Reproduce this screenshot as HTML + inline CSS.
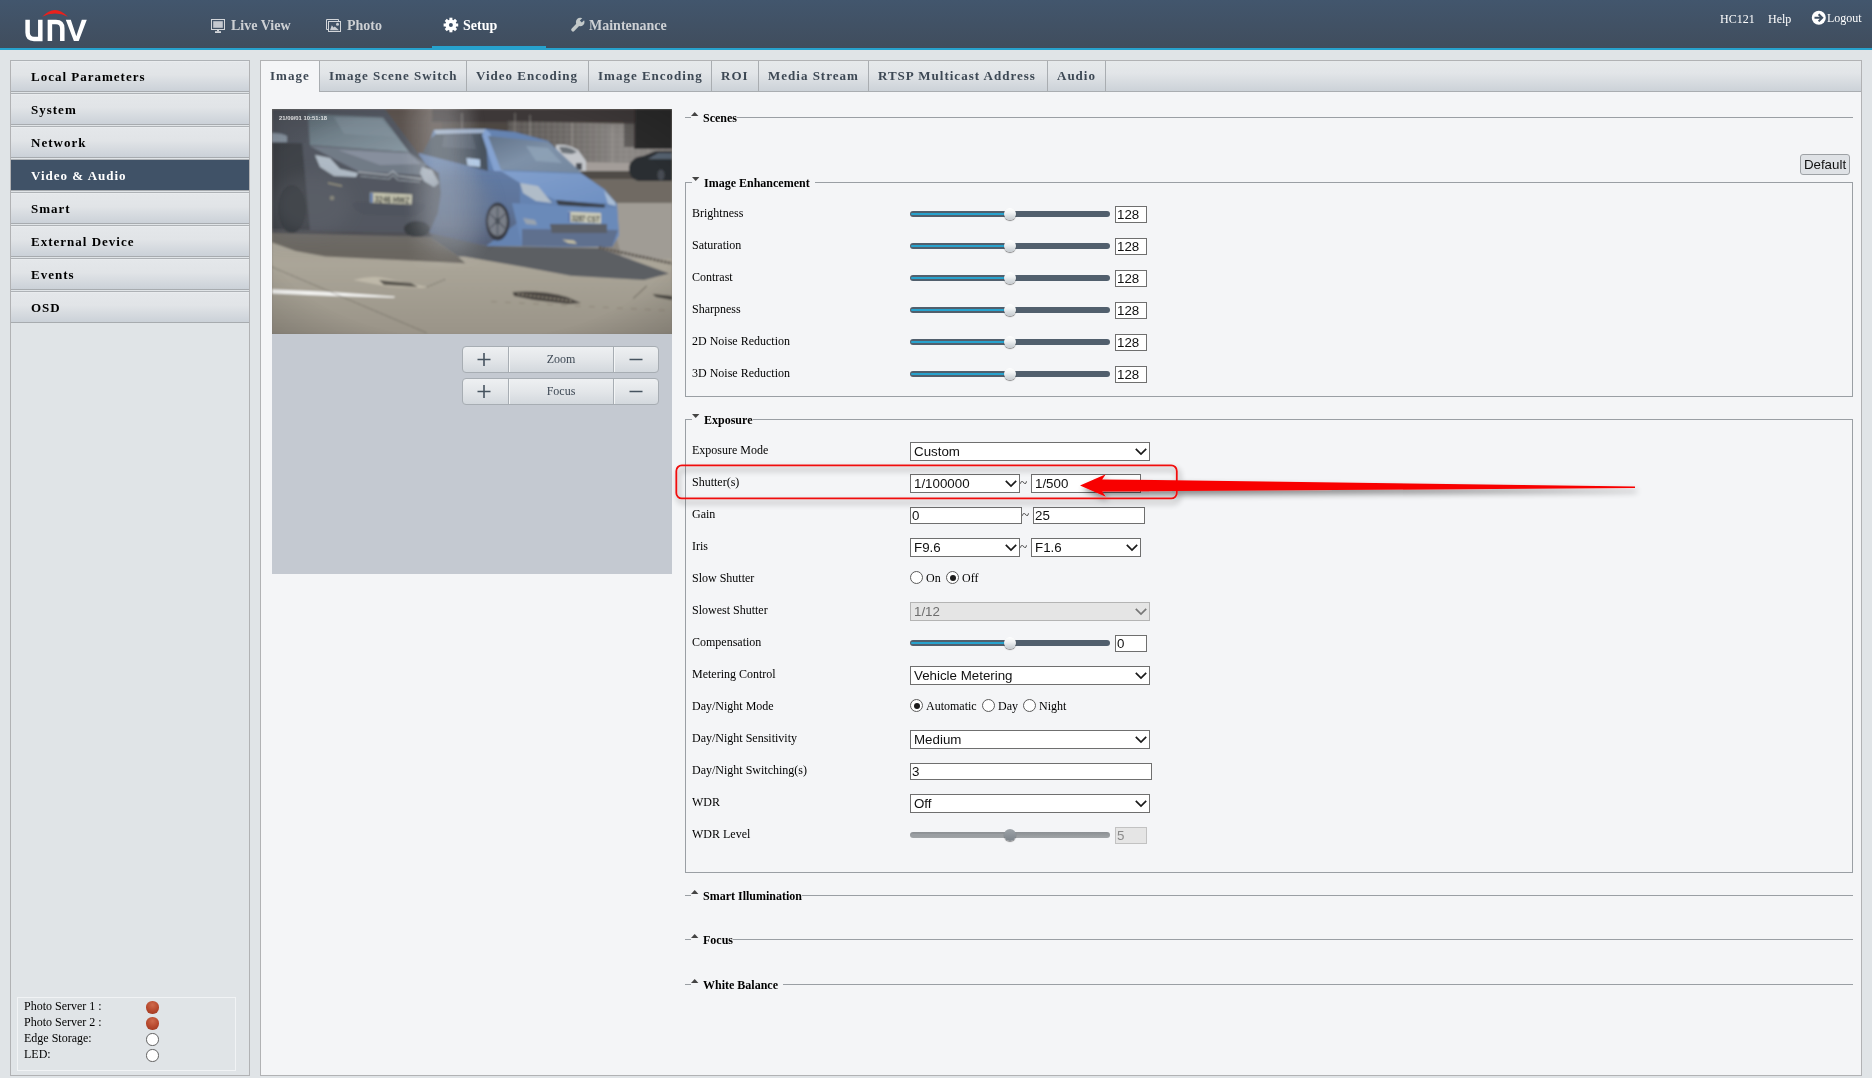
<!DOCTYPE html>
<html>
<head>
<meta charset="utf-8">
<title>Setup</title>
<style>
*{box-sizing:border-box;}
html,body{margin:0;padding:0;}
body{width:1872px;height:1078px;overflow:hidden;background:#e0e4e7;font-family:"Liberation Serif",serif;font-size:12px;color:#000;position:relative;}
div,span{position:absolute;white-space:nowrap;}
#hdr,#side,#main,#c{will-change:transform;}
svg{position:absolute;overflow:visible;}
/* header */
#hdr{left:0;top:0;width:1872px;height:50px;background:linear-gradient(#42566d,#404d5d);border-bottom:2px solid #27a2cd;}
.nav{top:17px;height:18px;line-height:18px;font-weight:bold;font-size:14px;color:#cdd0d4;}
.nav.on{color:#fff;}
.ul{left:432px;top:46px;width:114px;height:4px;background:#27a2cd;}
.r{top:11px;height:16px;line-height:16px;font-size:12px;color:#fff;}
/* sidebar */
#side{left:10px;top:60px;width:240px;height:1016px;border:1px solid #b1b2b4;background:#e0e4e7;}
.mi{left:0;width:238px;height:32px;border-top:1px solid #aeb2b6;border-bottom:1px solid #a7abaf;background:linear-gradient(#eef0f2 0,#e4e7ea 1px,#e1e4e7 45%,#cbd1d8 100%);font-weight:bold;font-size:13px;letter-spacing:1px;line-height:32px;padding-left:20px;color:#000;}
.mi.on{background:#405267;color:#fff;}
#stat{left:6px;top:936px;width:219px;height:74px;border:1px solid #f1f3f5;}
.sl{left:6px;height:16px;line-height:16px;font-size:12px;}
.led{left:128.4px;width:12.4px;height:12.4px;border-radius:50%;}
.led.r1{background:radial-gradient(circle at 50% 30%,#cf6a4c 0,#b6482d 55%,#98351e 100%);}
.led.w{background:#fff;border:1px solid #666;}
/* main */
#main{left:260px;top:60px;width:1602px;height:1016px;border:1px solid #b1b2b4;background:#f4f5f7;}
#tabs{left:0;top:0;width:1600px;height:31px;background:linear-gradient(#e6e9eb 0,#e2e5e8 40%,#ccd2d8 100%);border-bottom:1px solid #a9adb1;}
.tab{top:0;height:30px;border-right:1px solid #a9adb1;font-weight:bold;font-size:13px;letter-spacing:1px;line-height:29px;color:#3d4854;padding-left:9px;}
.tab.on{background:#f4f5f7;height:31px;}
/* content (page coords) */
#c{left:0;top:0;width:1872px;height:1078px;}
.ln{background:#9a9fa4;}
.lg{font-weight:bold;font-size:12px;height:16px;line-height:16px;color:#000;}
.lb{left:692px;height:16px;line-height:16px;font-size:12px;color:#000;}
.tx{height:16px;line-height:16px;font-size:12px;color:#000;}
.sel{height:19px;border:1px solid #6f6f6f;background:#fff;font-family:"Liberation Sans",sans-serif;font-size:13.333px;line-height:17px;padding-left:3px;color:#111;}
.sel.dis{background:#e5e5e5;border-color:#b4b4b4;color:#6d6d6d;}
.inp{height:17px;border:1px solid #6f6f6f;background:#fff;font-family:"Liberation Sans",sans-serif;font-size:13.333px;line-height:15px;padding-left:1px;color:#111;}
.inp.dis{background:#e5e5e5;border-color:#c2c2c2;color:#8a8a8a;}
.trk{left:910px;width:200px;height:6px;border-radius:3px;background:#515f6d;}
.trk i{position:absolute;left:1px;top:2px;width:100px;height:2px;border-radius:1px;background:#27a2cd;}
.trk.dis{background:linear-gradient(#8b8f93,#a1a5a8);}
.trk.dis i{background:#9a9ea2;}
.th{left:1004px;width:12px;height:12px;border-radius:50%;background:linear-gradient(#ffffff 0,#f0f2f3 40%,#c3c9ce 100%);box-shadow:0 1px 1px rgba(0,0,0,.45);}
.th.dis{background:linear-gradient(#9da3a8,#7d848a);}
.rad{width:13px;height:13px;border-radius:50%;border:1px solid #5a5a5a;background:#fff;}
.rad.on::after{content:"";position:absolute;left:2.5px;top:2.5px;width:6px;height:6px;border-radius:50%;background:#1c1c1c;}
.btng{width:197px;height:27px;border:1px solid #a7adb3;border-radius:4px;background:linear-gradient(#eef0f2 0,#e3e6e9 50%,#d3d8dd 100%);}
.btng b{position:absolute;top:0;width:1px;height:25px;background:#a7adb3;box-shadow:1px 0 0 #f3f5f6;}
.btng span{top:4px;height:16px;line-height:16px;font-size:12px;color:#3d4854;left:46px;width:104px;text-align:center;}
</style>
</head>
<body>
<div id="hdr"><div class="ul"></div>
<svg width="110" height="48" style="left:0;top:0">
<path d="M27.600 19.800V32.600Q27.600 39 34 39H40.300V19.800" fill="none" stroke="#fff" stroke-width="4.500"/>
<path d="M49.900 41V21.900H56Q62.300 21.900 62.300 28.400V41" fill="none" stroke="#fff" stroke-width="4.500"/>
<path d="M65.800 19.800H70.800L76.300 36.300L81.800 19.800H86.800L78.700 41H73.900Z" fill="#fff"/>
<path d="M42.200 16.800Q55 3 67.900 16.800Q55 10.200 42.200 16.800Z" fill="#e9211d"/>
</svg>

<svg width="700" height="48" style="left:0;top:0">
<!-- monitor -->
<rect x="211.500" y="19.500" width="13" height="10" fill="none" stroke="#d3d6da" stroke-width="1"/>
<rect x="213.200" y="21.200" width="9.600" height="6.600" fill="#c4c8cf"/>
<rect x="217" y="30" width="2" height="1.400" fill="#d3d6da"/>
<rect x="215" y="31.200" width="6" height="1.800" fill="#d3d6da"/>
<!-- photo -->
<path d="M328 29.500H326.500V19.500H338.500V21" fill="none" stroke="#d3d6da" stroke-width="1"/>
<rect x="328.500" y="21.500" width="12" height="10" fill="none" stroke="#d3d6da" stroke-width="1"/>
<path d="M330 30.200L331.800 25.200L333.600 27.600L334.800 26.600L339 30.200Z" fill="#c9cdd2"/>
<circle cx="337.500" cy="24.300" r="1.500" fill="#c9cdd2"/>
<!-- gear -->
<g transform="translate(450.900 25)" fill="#fff">
<circle r="5.500"/>
<g id="t"><rect x="-1.500" y="-7.300" width="3" height="14.600"/></g>
<rect x="-1.500" y="-7.300" width="3" height="14.600" transform="rotate(45)"/>
<rect x="-1.500" y="-7.300" width="3" height="14.600" transform="rotate(90)"/>
<rect x="-1.500" y="-7.300" width="3" height="14.600" transform="rotate(135)"/>
<circle r="2" fill="#405268"/>
</g>
<!-- wrench -->
<g>
<path d="M573 29.800L579.500 23" stroke="#c3c9c9" stroke-width="3.600" stroke-linecap="round" fill="none"/>
<circle cx="580.200" cy="22" r="4.300" fill="#c3c9c9"/>
<path d="M580.800 21.600L586 16.600" stroke="#415369" stroke-width="2.800" fill="none"/>
</g>
</svg>
<svg width="16" height="16" style="left:1811px;top:10px"><circle cx="7.800" cy="7.800" r="7" fill="#fff"/><path d="M3.500 7.800H10.500M7.600 4.200L11.200 7.800L7.600 11.400" fill="none" stroke="#3f5064" stroke-width="2"/></svg>

<div class="nav" style="left:231px">Live View</div>
<div class="nav" style="left:347px">Photo</div>
<div class="nav on" style="left:463px">Setup</div>
<div class="nav" style="left:589px">Maintenance</div>
<div class="r" style="left:1720px">HC121</div>
<div class="r" style="left:1768px">Help</div>
<div class="r" style="left:1827px;top:10px">Logout</div>
</div>
<div id="side">
<div class="mi" style="top:-1px">Local Parameters</div>
<div class="mi" style="top:32px">System</div>
<div class="mi" style="top:65px">Network</div>
<div class="mi on" style="top:98px">Video &amp; Audio</div>
<div class="mi" style="top:131px">Smart</div>
<div class="mi" style="top:164px">External Device</div>
<div class="mi" style="top:197px">Events</div>
<div class="mi" style="top:230px">OSD</div>
<div id="stat">
<div class="sl" style="top:0px">Photo Server 1 :</div><div class="led r1" style="top:3.3px"></div>
<div class="sl" style="top:16px">Photo Server 2 :</div><div class="led r1" style="top:19.3px"></div>
<div class="sl" style="top:32px">Edge Storage:</div><div class="led w" style="top:35.3px"></div>
<div class="sl" style="top:48px">LED:</div><div class="led w" style="top:51.3px"></div>
</div></div>
<div id="main"><div id="tabs">
<div class="tab on" style="left:0px;width:59px">Image</div>
<div class="tab" style="left:59px;width:147px">Image Scene Switch</div>
<div class="tab" style="left:206px;width:122px">Video Encoding</div>
<div class="tab" style="left:328px;width:123px">Image Encoding</div>
<div class="tab" style="left:451px;width:47px">ROI</div>
<div class="tab" style="left:498px;width:110px">Media Stream</div>
<div class="tab" style="left:608px;width:179px">RTSP Multicast Address</div>
<div class="tab" style="left:787px;width:58px">Audio</div>
</div></div>
<div id="c">
<div style="left:272px;top:334px;width:400px;height:240px;background:#c4c9d1"></div>
<svg width="400" height="225" viewBox="0 0 400 225" style="left:272px;top:109px;overflow:hidden">
<defs>
<filter id="bl" x="-5%" y="-5%" width="110%" height="110%"><feGaussianBlur stdDeviation="0.8"/></filter>
<filter id="bl3" x="-20%" y="-20%" width="140%" height="140%"><feGaussianBlur stdDeviation="3"/></filter>
<filter id="bl8" x="-30%" y="-30%" width="160%" height="160%"><feGaussianBlur stdDeviation="8"/></filter>
<linearGradient id="gnd" x1="0" y1="0" x2="0" y2="1"><stop offset="0" stop-color="#a5a095"/><stop offset=".45" stop-color="#aaa598"/><stop offset="1" stop-color="#9a9488"/></linearGradient>
<linearGradient id="ws1" x1="0" y1="0" x2="1" y2="1"><stop offset="0" stop-color="#596871"/><stop offset=".6" stop-color="#75858f"/><stop offset="1" stop-color="#8797a1"/></linearGradient>
<linearGradient id="ws2" x1="0" y1="0" x2="1" y2="1"><stop offset="0" stop-color="#63748a"/><stop offset=".5" stop-color="#7e91a8"/><stop offset="1" stop-color="#74879e"/></linearGradient>
<linearGradient id="hood2" x1="0" y1="0" x2="1" y2="1"><stop offset="0" stop-color="#82a0cd"/><stop offset="1" stop-color="#6f90c2"/></linearGradient>
<linearGradient id="side2" x1="0" y1="0" x2="0" y2="1"><stop offset="0" stop-color="#6680ab"/><stop offset=".6" stop-color="#5d7398"/><stop offset="1" stop-color="#565f75"/></linearGradient>
<linearGradient id="fenceg" x1="0" y1="0" x2="1" y2="0"><stop offset="0" stop-color="#595552"/><stop offset=".35" stop-color="#6d6966"/><stop offset=".7" stop-color="#8a8683"/><stop offset="1" stop-color="#85817e"/></linearGradient>
<linearGradient id="flare" x1="0" y1="0" x2="1" y2="0"><stop offset="0" stop-color="#fff" stop-opacity="0"/><stop offset=".4" stop-color="#fff" stop-opacity=".24"/><stop offset=".6" stop-color="#fff" stop-opacity=".22"/><stop offset="1" stop-color="#fff" stop-opacity="0"/></linearGradient>
<linearGradient id="flarev" x1="0" y1="0" x2="0" y2="1"><stop offset="0" stop-color="#fff"/><stop offset=".72" stop-color="#fff"/><stop offset="1" stop-color="#000"/></linearGradient>
<mask id="fm"><rect x="90" y="-10" width="140" height="175" fill="url(#flarev)"/></mask>
<radialGradient id="vig" cx=".5" cy=".5" r=".75"><stop offset=".7" stop-color="#000" stop-opacity="0"/><stop offset="1" stop-color="#000" stop-opacity=".18"/></radialGradient>
<pattern id="fence" width="6" height="5" patternUnits="userSpaceOnUse"><path d="M0 0H6M0 0V5" stroke="#c9c6c1" stroke-width=".6" opacity=".4"/></pattern>
</defs>
<rect width="400" height="225" fill="#8f8a80"/>
<g filter="url(#bl)">
<!-- ground -->
<rect x="0" y="100" width="400" height="125" fill="url(#gnd)"/>
<!-- wall / background top -->
<rect x="100" y="0" width="300" height="66" fill="#4e4642"/>
<rect x="110" y="0" width="60" height="62" fill="#554b45"/>
<rect x="160" y="0" width="240" height="13" fill="#3d3937"/>
<!-- fence area -->
<path d="M236 12L400 16V58L236 52Z" fill="url(#fenceg)"/>
<path d="M236 12L400 16V58L236 52Z" fill="url(#fence)"/>
<path d="M258 6V36M300 14V50M340 16V54M376 20V52M190 4V20M243 4V28" stroke="#bdb9b3" stroke-width="1" opacity=".5"/>
<rect x="362" y="0" width="38" height="40" fill="#2c2a2a"/>
<rect x="352" y="0" width="12" height="38" fill="#3c3938" opacity=".55"/>
<!-- kerb / light wall base -->
<path d="M312 53L362 54V62L312 62Z" fill="#a39d99"/>
<!-- road right -->
<path d="M305 62H400V150H330Z" fill="#8c8780"/>
<path d="M306 62H400V71L312 70Z" fill="#504b47"/>
<path d="M314 70H400V94H336Z" fill="#6f6a64"/>
<path d="M336 94H400V150H350Z" fill="#a09c95"/>
<!-- far black car -->
<path d="M357 58Q359 48 371 47L384 42H400V72L366 72Q356 69 357 58Z" fill="#2a2d33"/>
<path d="M376 50L386 44H400V50Z" fill="#56626f"/>
<ellipse cx="389" cy="66" rx="3.500" ry="5.500" fill="#474b52"/>
<!-- white car behind -->
<path d="M284 36Q296 35 306 41L314 52V62H297L284 44Z" fill="#c3c6ca"/>
<path d="M287 38Q297 37 305 43L300 45L290 44Z" fill="#6c7278"/>
<rect x="304" y="54" width="6" height="7" fill="#4c4f54"/>
<!-- BLUE CAR -->
<path d="M162 21L214 20L243 23L276 32L310 65L333 81L345 95L347 126L340 138L214 137L158 124L147 60Z" fill="#6583b1"/>
<path d="M147 44L214 60L248 66V112L214 137L158 126L148 90Z" fill="url(#side2)"/>
<path d="M165 24L214 23.500L216 62L150 45L158 30Z" fill="#4a525f"/>
<path d="M172 26L200 25.500L204 40L170 38Z" fill="#5c6675" opacity=".7"/>
<path d="M162 21L214 20L214 24L164 25Z" fill="#9eb0ca"/>
<path d="M213 20L218 24L231 62L222 62L210 26Z" fill="#84a2d0"/>
<path d="M216 27L276 33L310 64L229 61Z" fill="url(#ws2)"/>
<path d="M254 37L276 39L290 54L264 52Z" fill="#93a7ba" opacity=".7"/>
<path d="M229 62L310 65L333 81L335.500 94L286 92L248 74Z" fill="url(#hood2)"/>
<path d="M248 74L266 77L280 94L264 92L251 84Z" fill="#b0bcc8"/>
<path d="M332 81L343 93L344 97L336 95Z" fill="#a8bcd4"/>
<path d="M284 91L333 95.500L332.500 99.500L286 96Z" fill="#3a4048"/>
<path d="M240 94L286 97L345 99L347 126L340 138L250 137Z" fill="#6b8ab9"/>
<path d="M250 120L346 121L340 138L250 137Z" fill="#5f6f8e"/>
<path d="M278 115H335V124H280Z" fill="#52576399"/>
<path d="M278 115H335V124H280Z" fill="#5a5e68"/>
<path d="M251 109L263 111L265 116L254 115Z" fill="#98a3af"/>
<path d="M194.500 49L208 50.500V58L195.500 56.500Z" fill="#b3cbe8"/>
<!-- wheel -->
<ellipse cx="225.500" cy="112.500" rx="12" ry="19" fill="#383b43"/>
<ellipse cx="225.500" cy="112" rx="9.400" ry="15" fill="#7a7f88"/>
<path d="M225.500 98V126M217 104L234 120M217 120L234 104" stroke="#555a63" stroke-width="1.400"/>
<ellipse cx="225.500" cy="112" rx="2.500" ry="3.500" fill="#4a4f58"/>
<!-- plate 2 -->
<path d="M296 102.500L329 104L329 114.500L296 113Z" fill="#cacab8"/>
<path d="M296.300 103L298.200 103.100V113L296.300 112.900Z" fill="#3d62a8"/>
<text x="299.500" y="112" font-family="Liberation Sans" font-weight="bold" font-size="8.500" fill="#3a3c38" transform="rotate(2.500 299 112)" textLength="28" lengthAdjust="spacingAndGlyphs">3287 CST</text>
<!-- shadows -->
<path d="M0 110H150L158 124L214 137L327 139L397 164.500L372 171L299 166.700L252 158L192 147.500L186 147.500L158 128L0 124Z" fill="#5c5e63"/>
<path d="M0 123L158 128L186 147.500L193.400 154.300L53.400 147.500L23.500 142L0 133.500Z" fill="#6b6660"/>
<path d="M0 110H150L160 128L0 124Z" fill="#48494d"/>
<path d="M327 138.500L400 154.500" stroke="#5a544e" stroke-width="3" stroke-dasharray="2.500 1.200"/>
<path d="M290 130.500L302 131.500L305 135L296 134Z" fill="#c2bda2"/>
<!-- DARK (grey) CAR -->
<path d="M0 0H113L145 43L154 55.500L167 64L169 84L166 104L158 122L150 124L28 121L0 120Z" fill="#4c5059"/>
<path d="M0 32H30L38 121L0 120Z" fill="#36383d"/>
<path d="M0 0H36L34 34H0Z" fill="#494e57"/>
<path d="M36 5L111 8.500L137 43L38 36Z" fill="url(#ws1)"/>
<path d="M62 8L109 10L124 28L72 25Z" fill="#8595a0" opacity=".45"/>
<path d="M38 37L137 43L154 55.500L150 66L85.500 62L64 51Z" fill="#6d7682"/>
<path d="M66 41L137 44.500L149 55L108 56Z" fill="#8b94a1" opacity=".8"/>
<path d="M43 46L58 49L68 60L86 64L84 68L62 67L48 58Z" fill="#b2bdc8"/>
<path d="M150 58L160 61L167 74L162 78L152 72L148 64Z" fill="#a9b3be"/>
<path d="M86 63L116 66L121 62L126 67L150 70" stroke="#a5acb3" stroke-width="1.300" fill="none"/>
<path d="M88 67L117 70L121 66L126 71L148 73" stroke="#9098a0" stroke-width="1.100" fill="none"/>
<path d="M80 95Q82 104 96 106L140 107Q152 105 154 96L150 94L84 93Z" fill="#474b54"/>
<path d="M56 74L70 77" stroke="#9a947a" stroke-width="1.500"/>
<circle cx="60" cy="89" r="2.200" fill="#8f8c78"/>
<path d="M0 24Q10 24 15 27V33H0Z" fill="#8793a0"/>
<ellipse cx="145" cy="120" rx="13" ry="8" fill="#2e3035"/>
<ellipse cx="20" cy="100" rx="14" ry="24" fill="#2b2d31"/>
<!-- plate 1 -->
<path d="M98 83.500L140 85.500L139.500 95.500L98 93.500Z" fill="#c8c6ae"/>
<path d="M98.500 84L100.800 84.200V93.500L98.500 93.400Z" fill="#3d62a8"/>
<text x="102.500" y="93" font-family="Liberation Sans" font-weight="bold" font-size="9" fill="#33352f" transform="rotate(2.500 103 93)" textLength="35" lengthAdjust="spacingAndGlyphs">3246 HWZ</text>
<!-- manholes etc -->
<path d="M81 171Q100 166 112 169L156 178L150 179L118 178Z" fill="#cfc8b8" opacity=".6"/>
<path d="M107 171L139 174L146 178L112 176Z" fill="#4a4642" opacity=".85"/>
<path d="M240.600 183Q270 181 295 188L309 194L296 195L262 191L242 187Z" fill="#4b4743"/>
<path d="M246 185L300 192" stroke="#b9b09c" stroke-width="1.200" stroke-dasharray="1.500 2.500"/>
<path d="M0 180.300L60 183L123 187.500L122 188.800L60 187L0 184.500Z" fill="#f2f2f0"/>
<path d="M0 158L155 224" stroke="#4f4a44" stroke-width=".8" stroke-dasharray="1.500 1.300"/>
<path d="M219 192.600L400 201.700" stroke="#7f776a" stroke-width=".8" stroke-dasharray="6 8" opacity=".7"/>
<path d="M361.300 189.400L374.700 177" stroke="#4a4640" stroke-width=".9"/>
<path d="M380.500 185L400 187V191L384 188Z" fill="#4a4642"/>
<path d="M155 178L174 170" stroke="#5a554e" stroke-width=".8" stroke-dasharray="2 1.500"/>
</g>
<!-- haze / flare -->
<rect x="0" y="0" width="200" height="135" fill="#9aa2ac" opacity=".10" filter="url(#bl8)"/>
<g transform="rotate(-3 165 0)"><rect x="128" y="-10" width="80" height="170" fill="url(#flare)" mask="url(#fm)" filter="url(#bl3)"/></g>
<ellipse cx="185" cy="100" rx="34" ry="40" fill="#7f8794" opacity=".38" filter="url(#bl8)"/>
<ellipse cx="40" cy="95" rx="40" ry="30" fill="#6d7078" opacity=".25" filter="url(#bl8)"/>
<rect width="400" height="225" fill="url(#vig)"/>
<text x="7" y="11" font-family="Liberation Sans" font-weight="bold" font-size="5.200" fill="#f4f4f4" opacity=".85" textLength="48" lengthAdjust="spacingAndGlyphs">21/09/01 10:51:18</text>
</svg>

<div class="btng" style="left:462px;top:346px"><b style="left:45px"></b><b style="left:150px"></b><span>Zoom</span><svg width="197" height="27" style="left:-1px;top:-1px"><path d="M15.5 13.5h13M22 7v13M167.500 13.5h13" stroke="#46535f" stroke-width="1.6" fill="none"/></svg></div>
<div class="btng" style="left:462px;top:378px"><b style="left:45px"></b><b style="left:150px"></b><span>Focus</span><svg width="197" height="27" style="left:-1px;top:-1px"><path d="M15.5 13.5h13M22 7v13M167.500 13.5h13" stroke="#46535f" stroke-width="1.6" fill="none"/></svg></div>
<div class="ln" style="left:685px;top:117px;width:6px;height:1px"></div>
<div class="ln" style="left:737px;top:117px;width:1116px;height:1px"></div>
<svg width="8" height="4" style="left:691px;top:112px"><path d="M0 4L3.700 0L7.400 4Z" fill="#444"/></svg>
<div class="lg" style="left:703px;top:110px">Scenes</div>
<div class="ln" style="left:685px;top:182px;width:7px;height:1px"></div>
<div class="ln" style="left:815px;top:182px;width:1038px;height:1px"></div>
<div class="ln" style="left:685px;top:182px;width:1px;height:215px"></div>
<div class="ln" style="left:1852px;top:182px;width:1px;height:215px"></div>
<div class="ln" style="left:685px;top:396px;width:1168px;height:1px"></div>
<svg width="8" height="4" style="left:692px;top:177px"><path d="M0 0L7.400 0L3.700 4Z" fill="#444"/></svg>
<div class="lg" style="left:704px;top:175px">Image Enhancement</div>
<div class="ln" style="left:685px;top:419px;width:7px;height:1px"></div>
<div class="ln" style="left:753px;top:419px;width:1100px;height:1px"></div>
<div class="ln" style="left:685px;top:419px;width:1px;height:454px"></div>
<div class="ln" style="left:1852px;top:419px;width:1px;height:454px"></div>
<div class="ln" style="left:685px;top:872px;width:1168px;height:1px"></div>
<svg width="8" height="4" style="left:692px;top:414px"><path d="M0 0L7.400 0L3.700 4Z" fill="#444"/></svg>
<div class="lg" style="left:704px;top:412px">Exposure</div>
<div class="ln" style="left:685px;top:895px;width:6px;height:1px"></div>
<div class="ln" style="left:802px;top:895px;width:1051px;height:1px"></div>
<svg width="8" height="4" style="left:691px;top:890px"><path d="M0 4L3.700 0L7.400 4Z" fill="#444"/></svg>
<div class="lg" style="left:703px;top:888px">Smart Illumination</div>
<div class="ln" style="left:685px;top:939px;width:6px;height:1px"></div>
<div class="ln" style="left:733px;top:939px;width:1120px;height:1px"></div>
<svg width="8" height="4" style="left:691px;top:934px"><path d="M0 4L3.700 0L7.400 4Z" fill="#444"/></svg>
<div class="lg" style="left:703px;top:932px">Focus</div>
<div class="ln" style="left:685px;top:984px;width:6px;height:1px"></div>
<div class="ln" style="left:783px;top:984px;width:1070px;height:1px"></div>
<svg width="8" height="4" style="left:691px;top:979px"><path d="M0 4L3.700 0L7.400 4Z" fill="#444"/></svg>
<div class="lg" style="left:703px;top:977px">White Balance</div>
<div style="left:1800px;top:154px;width:50px;height:21px;border:1px solid #9da1a5;border-radius:3px;background:#dfe2e6;font-family:'Liberation Sans',sans-serif;font-size:13.333px;line-height:19px;text-align:center;color:#111">Default</div>
<div class="lb" style="top:205px">Brightness</div>
<div class="trk" style="top:211px"><i></i></div><div class="th" style="top:208px"></div>
<div class="inp" style="left:1115px;top:206px;width:32px">128</div>
<div class="lb" style="top:237px">Saturation</div>
<div class="trk" style="top:243px"><i></i></div><div class="th" style="top:240px"></div>
<div class="inp" style="left:1115px;top:238px;width:32px">128</div>
<div class="lb" style="top:269px">Contrast</div>
<div class="trk" style="top:275px"><i></i></div><div class="th" style="top:272px"></div>
<div class="inp" style="left:1115px;top:270px;width:32px">128</div>
<div class="lb" style="top:301px">Sharpness</div>
<div class="trk" style="top:307px"><i></i></div><div class="th" style="top:304px"></div>
<div class="inp" style="left:1115px;top:302px;width:32px">128</div>
<div class="lb" style="top:333px">2D Noise Reduction</div>
<div class="trk" style="top:339px"><i></i></div><div class="th" style="top:336px"></div>
<div class="inp" style="left:1115px;top:334px;width:32px">128</div>
<div class="lb" style="top:365px">3D Noise Reduction</div>
<div class="trk" style="top:371px"><i></i></div><div class="th" style="top:368px"></div>
<div class="inp" style="left:1115px;top:366px;width:32px">128</div>
<div class="lb" style="top:442px">Exposure Mode</div>
<div class="lb" style="top:474px">Shutter(s)</div>
<div class="lb" style="top:506px">Gain</div>
<div class="lb" style="top:538px">Iris</div>
<div class="lb" style="top:570px">Slow Shutter</div>
<div class="lb" style="top:602px">Slowest Shutter</div>
<div class="lb" style="top:634px">Compensation</div>
<div class="lb" style="top:666px">Metering Control</div>
<div class="lb" style="top:698px">Day/Night Mode</div>
<div class="lb" style="top:730px">Day/Night Sensitivity</div>
<div class="lb" style="top:762px">Day/Night Switching(s)</div>
<div class="lb" style="top:794px">WDR</div>
<div class="lb" style="top:826px">WDR Level</div>
<div class="sel" style="left:910px;top:442px;width:240px">Custom<svg width="12" height="7" style="right:2.5px;top:4.5px"><path d="M0.8 0.8L6 6L11.2 0.8" fill="none" stroke="#1a1a1a" stroke-width="1.7"/></svg></div>
<div class="sel" style="left:910px;top:474px;width:110px">1/100000<svg width="12" height="7" style="right:2.5px;top:4.5px"><path d="M0.8 0.8L6 6L11.2 0.8" fill="none" stroke="#1a1a1a" stroke-width="1.7"/></svg></div>
<div class="tx" style="left:1020px;top:475px;font-size:13px">~</div>
<div class="sel" style="left:1031px;top:474px;width:110px">1/500<svg width="12" height="7" style="right:2.5px;top:4.5px"><path d="M0.8 0.8L6 6L11.2 0.8" fill="none" stroke="#1a1a1a" stroke-width="1.7"/></svg></div>
<div class="inp" style="left:910px;top:507px;width:112px">0</div>
<div class="tx" style="left:1022px;top:507px;font-size:13px">~</div>
<div class="inp" style="left:1033px;top:507px;width:112px">25</div>
<div class="sel" style="left:910px;top:538px;width:110px">F9.6<svg width="12" height="7" style="right:2.5px;top:4.5px"><path d="M0.8 0.8L6 6L11.2 0.8" fill="none" stroke="#1a1a1a" stroke-width="1.7"/></svg></div>
<div class="tx" style="left:1020px;top:539px;font-size:13px">~</div>
<div class="sel" style="left:1031px;top:538px;width:110px">F1.6<svg width="12" height="7" style="right:2.5px;top:4.5px"><path d="M0.8 0.8L6 6L11.2 0.8" fill="none" stroke="#1a1a1a" stroke-width="1.7"/></svg></div>
<div class="rad" style="left:910px;top:571px"></div><div class="tx" style="left:926px;top:570px">On</div>
<div class="rad on" style="left:946px;top:571px"></div><div class="tx" style="left:962px;top:570px">Off</div>
<div class="sel dis" style="left:910px;top:602px;width:240px">1/12<svg width="12" height="7" style="right:2.5px;top:4.5px"><path d="M0.8 0.8L6 6L11.2 0.8" fill="none" stroke="#777" stroke-width="1.7"/></svg></div>
<div class="trk" style="top:640px"><i></i></div><div class="th" style="top:637px"></div>
<div class="inp" style="left:1115px;top:635px;width:32px">0</div>
<div class="sel" style="left:910px;top:666px;width:240px">Vehicle Metering<svg width="12" height="7" style="right:2.5px;top:4.5px"><path d="M0.8 0.8L6 6L11.2 0.8" fill="none" stroke="#1a1a1a" stroke-width="1.7"/></svg></div>
<div class="rad on" style="left:910px;top:699px"></div><div class="tx" style="left:926px;top:698px">Automatic</div>
<div class="rad" style="left:982px;top:699px"></div><div class="tx" style="left:998px;top:698px">Day</div>
<div class="rad" style="left:1023px;top:699px"></div><div class="tx" style="left:1039px;top:698px">Night</div>
<div class="sel" style="left:910px;top:730px;width:240px">Medium<svg width="12" height="7" style="right:2.5px;top:4.5px"><path d="M0.8 0.8L6 6L11.2 0.8" fill="none" stroke="#1a1a1a" stroke-width="1.7"/></svg></div>
<div class="inp" style="left:910px;top:763px;width:242px">3</div>
<div class="sel" style="left:910px;top:794px;width:240px">Off<svg width="12" height="7" style="right:2.5px;top:4.5px"><path d="M0.8 0.8L6 6L11.2 0.8" fill="none" stroke="#1a1a1a" stroke-width="1.7"/></svg></div>
<div class="trk dis" style="top:832px"><i></i></div><div class="th dis" style="top:829px"></div>
<div class="inp dis" style="left:1115px;top:827px;width:32px">5</div>
<svg width="1872" height="1078" style="left:0;top:0;pointer-events:none">
<defs>
<filter id="sh" x="-5%" y="-50%" width="110%" height="220%"><feGaussianBlur in="SourceAlpha" stdDeviation="3"/><feOffset dx="2" dy="4"/><feComponentTransfer><feFuncA type="linear" slope=".45"/></feComponentTransfer><feMerge><feMergeNode/><feMergeNode in="SourceGraphic"/></feMerge></filter>
</defs>
<g filter="url(#sh)">
<rect x="676.300" y="465.400" width="500.500" height="33" rx="5.500" ry="5.500" fill="none" stroke="#f01010" stroke-width="1.800"/>
<path d="M1080 485.500L1105.800 474.300L1102.200 479.400L1635 486.400L1635 488L1102.200 491.600L1105.800 496.800Z" fill="#f80000"/>
</g>
</svg>

</div>
</body>
</html>
